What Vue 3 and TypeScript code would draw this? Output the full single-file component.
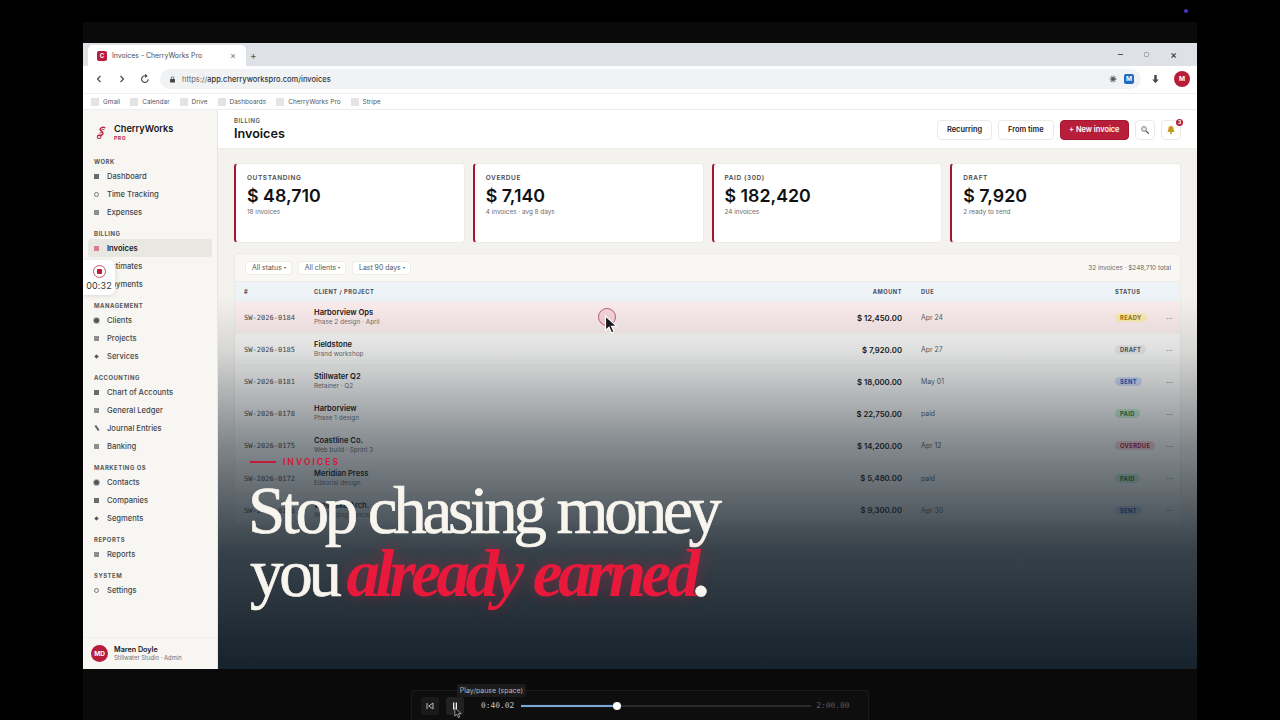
<script setup lang="ts">
interface NavItem { label: string; ico: string; active?: boolean }
interface NavSection { title: string; items: NavItem[] }
const sections: NavSection[] = [
  { title: 'WORK', items: [
    { label: 'Dashboard', ico: 'sq' }, { label: 'Time Tracking', ico: 'ring' }, { label: 'Expenses', ico: 'lt' } ] },
  { title: 'BILLING', items: [
    { label: 'Invoices', ico: 'pink', active: true }, { label: 'Estimates', ico: 'lt' }, { label: 'Payments', ico: 'lt' } ] },
  { title: 'MANAGEMENT', items: [
    { label: 'Clients', ico: 'dot' }, { label: 'Projects', ico: 'lt' }, { label: 'Services', ico: 'dia' } ] },
  { title: 'ACCOUNTING', items: [
    { label: 'Chart of Accounts', ico: 'sq' }, { label: 'General Ledger', ico: 'lt' }, { label: 'Journal Entries', ico: 'pen' }, { label: 'Banking', ico: 'lt' } ] },
  { title: 'MARKETING OS', items: [
    { label: 'Contacts', ico: 'dot' }, { label: 'Companies', ico: 'sq' }, { label: 'Segments', ico: 'dia' } ] },
  { title: 'REPORTS', items: [ { label: 'Reports', ico: 'lt' } ] },
  { title: 'SYSTEM', items: [ { label: 'Settings', ico: 'ring' } ] },
]
const bookmarks = ['Gmail', 'Calendar', 'Drive', 'Dashboards', 'CherryWorks Pro', 'Stripe']
const cards = [
  { label: 'OUTSTANDING', value: '$ 48,710', sub: '18 invoices' },
  { label: 'OVERDUE', value: '$ 7,140', sub: '4 invoices · avg 8 days' },
  { label: 'PAID (30D)', value: '$ 182,420', sub: '24 invoices' },
  { label: 'DRAFT', value: '$ 7,920', sub: '2 ready to send' },
]
const filters = ['All status', 'All clients', 'Last 90 days']
const rows = [
  { id: 'SW-2026-0184', name: 'Harborview Ops', sub: 'Phase 2 design · April', amount: '$ 12,450.00', due: 'Apr 24', status: 'READY' },
  { id: 'SW-2026-0185', name: 'Fieldstone', sub: 'Brand workshop', amount: '$ 7,920.00', due: 'Apr 27', status: 'DRAFT' },
  { id: 'SW-2026-0181', name: 'Stillwater Q2', sub: 'Retainer · Q2', amount: '$ 18,000.00', due: 'May 01', status: 'SENT' },
  { id: 'SW-2026-0178', name: 'Harborview', sub: 'Phase 1 design', amount: '$ 22,750.00', due: 'paid', status: 'PAID' },
  { id: 'SW-2026-0175', name: 'Coastline Co.', sub: 'Web build · Sprint 3', amount: '$ 14,200.00', due: 'Apr 12', status: 'OVERDUE' },
  { id: 'SW-2026-0172', name: 'Meridian Press', sub: 'Editorial design', amount: '$ 5,480.00', due: 'paid', status: 'PAID' },
  { id: 'SW-2026-0168', name: 'Westlake Arch.', sub: 'Wayfinding concept', amount: '$ 9,300.00', due: 'Apr 30', status: 'SENT' },
]
</script>

<template>
  <div class="root">
    <span class="spark"></span>
    <div class="stage">
      <div class="browser">
        <div class="tabstrip">
          <div class="tab">
            <span class="favicon">C</span>
            <span class="tab-title">Invoices - CherryWorks Pro</span>
            <span class="tab-x">×</span>
          </div>
          <span class="tab-plus">+</span>
          <div class="winctl">
            <span class="min"></span>
            <span class="max"></span>
            <span class="cls">×</span>
          </div>
        </div>
        <div class="addr-row">
          <svg class="nav-ic" viewBox="0 0 10 10"><path d="M6.5 2 3.5 5l3 3" /></svg>
          <svg class="nav-ic" viewBox="0 0 10 10"><path d="M3.5 2 6.5 5l-3 3" /></svg>
          <svg class="nav-ic" viewBox="0 0 10 10"><path d="M8.2 5.2A3.3 3.3 0 1 1 5.6 1.9M5.2.4l1.7 1.5-1.7 1.3" /></svg>
          <div class="omni">
            <svg class="lock" viewBox="0 0 8 8"><rect x="1.2" y="3.4" width="5.6" height="4" rx=".6" /><path d="M2.5 3.4V2.3a1.5 1.5 0 0 1 3 0v1.1" fill="none" stroke="#444" stroke-width=".8" /></svg>
            <span class="url"><span class="url-dim">https://</span>app.cherryworkspro.com/invoices</span>
            <span class="spacer"></span>
            <svg class="ext-gear" viewBox="0 0 10 10"><circle cx="5" cy="5" r="2.6" fill="#555" /><circle cx="5" cy="5" r="3.6" fill="none" stroke="#555" stroke-width="1.3" stroke-dasharray="1.2 1.1" /></svg>
            <span class="ext-m">M</span>
          </div>
          <svg class="dl" viewBox="0 0 10 12"><path d="M3.6 1h2.8v5h2.2L5 10.2 1.4 6h2.2z" fill="#4a4a4a" /></svg>
          <span class="acct">M</span>
        </div>
        <div class="bookmarks">
          <div v-for="b in bookmarks" :key="b" class="bm"><span class="bm-sq"></span><span>{{ b }}</span></div>
        </div>

        <div class="app">
          <aside class="side">
            <div class="brand">
              <svg class="logo" viewBox="0 0 12 15">
                <path d="M10 1.6C7.4.8 4.6 1.6 4.4 3.6c-.2 1.8 3.6 2 3.2 4.2-.3 1.8-3 3-5 2.4" fill="none" stroke="#b81d3a" stroke-width="1.5" />
                <circle cx="3.4" cy="11.6" r="2" fill="none" stroke="#b81d3a" stroke-width="1.1" />
                <path d="M5.6 4.2 9.4 3.4M3.6 7.6l3-.6" stroke="#7c1a2d" stroke-width=".8" fill="none" />
              </svg>
              <div class="brand-text">
                <div class="brand-name">CherryWorks</div>
                <div class="brand-pro">PRO</div>
              </div>
            </div>
            <nav class="nav">
              <section v-for="s in sections" :key="s.title" class="sec">
                <div class="sec-title">{{ s.title }}</div>
                <div v-for="i in s.items" :key="i.label" class="item" :class="{ active: i.active }">
                  <span class="ico" :class="i.ico"></span>
                  <span>{{ i.label }}</span>
                </div>
              </section>
            </nav>
            <div class="user">
              <span class="user-av">MD</span>
              <div class="user-text">
                <div class="user-name">Maren Doyle</div>
                <div class="user-sub">Stillwater Studio · Admin</div>
              </div>
            </div>
          </aside>

          <main class="main">
            <header class="top">
              <div>
                <div class="crumb">BILLING</div>
                <h1 class="title">Invoices</h1>
              </div>
              <div class="actions">
                <button class="btn">Recurring</button>
                <button class="btn">From time</button>
                <button class="btn primary">+ New invoice</button>
                <button class="btn sq-btn">
                  <svg viewBox="0 0 10 10" class="a-ic"><circle cx="4" cy="4" r="2.4" fill="#dfe8ee" stroke="#777" stroke-width=".9" /><path d="M5.9 5.9 8.8 8.8" stroke="#555" stroke-width="1.3" /></svg>
                </button>
                <button class="btn sq-btn">
                  <svg viewBox="0 0 10 10" class="a-ic"><path d="M5 1c-1.8 0-2.6 1.3-2.6 3 0 1.500-.6 2.300-1.200 3h7.600c-.6-.7-1.200-1.500-1.200-3 0-1.700-.8-3-2.600-3z" fill="#c9981f" /><circle cx="5" cy="8.200" r=".9" fill="#9a7415" /></svg>
                  <span class="badge">3</span>
                </button>
              </div>
            </header>

            <div class="content">
              <div class="cards">
                <div v-for="c in cards" :key="c.label" class="card">
                  <div class="card-label">{{ c.label }}</div>
                  <div class="card-value">{{ c.value }}</div>
                  <div class="card-sub">{{ c.sub }}</div>
                </div>
              </div>

              <div class="panel">
                <div class="toolbar">
                  <span v-for="f in filters" :key="f" class="pill">{{ f }} <i>▾</i></span>
                  <span class="spacer"></span>
                  <span class="count">32 invoices · $248,710 total</span>
                </div>
                <div class="grid thead">
                  <span>#</span>
                  <span>CLIENT / PROJECT</span>
                  <span class="right">AMOUNT</span>
                  <span>DUE</span>
                  <span>STATUS</span>
                  <span></span>
                </div>
                <div v-for="(r, idx) in rows" :key="r.id" class="grid row" :class="{ hot: idx === 0 }">
                  <span class="rid">{{ r.id }}</span>
                  <div>
                    <div class="rname">{{ r.name }}</div>
                    <div class="rsub">{{ r.sub }}</div>
                  </div>
                  <span class="right ramt">{{ r.amount }}</span>
                  <span class="rdue">{{ r.due }}</span>
                  <span class="st-cell"><span class="st" :class="r.status.toLowerCase()">{{ r.status }}</span></span>
                  <span class="more">···</span>
                </div>
              </div>
            </div>

            <div class="fade"></div>
            <div class="hero">
              <div class="eyebrow"><span class="eb-line"></span><span>INVOICES</span></div>
              <div class="headline">
                <div class="line1">Stop chasing money</div>
                <div>you <em>already earned</em><span class="period">.</span></div>
              </div>
            </div>
            <span class="ring-cursor"></span>
            <svg class="cursor" viewBox="0 0 14 20"><path d="M1.500 1v14.500l3.500-3.300 2.500 5.800 2.600-1.100-2.500-5.600 4.900-.2z" fill="#1b1b1f" stroke="#fff" stroke-width="1.200" /></svg>
          </main>
        </div>

        <div class="rec">
          <span class="rec-btn"><span class="rec-sq"></span></span>
          <span class="rec-time">00:32</span>
        </div>
      </div>

      <div class="player-wrap">
        <div class="player">
          <span class="p-btn">
            <svg viewBox="0 0 10 10" class="p-ic"><path d="M2 2v6M8 2 3.700 5 8 8z" fill="none" stroke="#bbb" stroke-width="1" /></svg>
          </span>
          <span class="p-btn on">
            <svg viewBox="0 0 10 10" class="p-ic"><path d="M3 1.500h1.300v7H3zM5.700 1.500H7v7H5.700z" fill="#eee" /></svg>
          </span>
          <span class="p-time">0:40.02</span>
          <div class="track"><div class="fill"></div><span class="knob"></span></div>
          <span class="p-end">2:00.00</span>
          <span class="tip">Play/pause (space)</span>
          <svg class="p-cursor" viewBox="0 0 14 20"><path d="M1.500 1v14.500l3.500-3.300 2.500 5.800 2.600-1.100-2.500-5.600 4.900-.2z" fill="#111" stroke="#ddd" stroke-width="1.100" /></svg>
        </div>
      </div>
    </div>
  </div>
</template>

<style>
html, body { margin: 0; background: #000; overflow: hidden; }
</style>

<style scoped>
* { box-sizing: border-box; }
.root { position: relative; width: 1280px; height: 720px; background: #000; display: flex; justify-content: center; font-family: Inter, "Liberation Sans", sans-serif; overflow: hidden; }
.spark { position: absolute; left: 1184px; top: 9px; width: 4px; height: 4px; border-radius: 50%; background: #4a35c8; }
.stage { width: 1114px; height: 698px; margin-top: 22px; padding-top: 21px; background: #0a0a0a; display: flex; flex-direction: column; }
.browser { position: relative; height: 626px; background: #fff; display: flex; flex-direction: column; }

.tabstrip { height: 23px; background: #dee1e6; display: flex; align-items: flex-end; position: relative; padding-left: 5px; flex: none; }
.tab { width: 158px; height: 21px; background: #fff; border-radius: 5px 5px 0 0; display: flex; align-items: center; padding-left: 9px; }
.favicon { width: 10px; height: 10px; border-radius: 2px; background: #b81d3a; color: #fff; font-size: 6px; font-weight: 700; display: flex; align-items: center; justify-content: center; margin-right: 5px; }
.tab-title { font-size: 6.900px; color: #4a4d52; flex: 1; white-space: nowrap; }
.tab-x { font-size: 9px; color: #777; margin-right: 10px; line-height: 1; }
.tab-plus { font-size: 10px; color: #555; margin: 0 0 6px 4px; line-height: 1; }
.winctl { position: absolute; right: 20px; top: 6px; display: flex; align-items: center; gap: 21px; height: 10px; }
.min { width: 5px; height: 1px; background: #555; }
.max { width: 5px; height: 5px; border: 1px solid #aaa; border-radius: 1px; }
.cls { font-size: 10px; color: #444; line-height: 10px; font-weight: 600; }

.addr-row { height: 28px; flex: none; display: flex; align-items: center; padding: 0 7px 1px 11px; border-bottom: 1px solid #eceef0; }
.nav-ic { width: 10px; height: 10px; fill: none; stroke: #444; stroke-width: 1.100; margin-right: 13px; flex: none; }
.omni { width: 981px; height: 20px; margin-left: -3px; border-radius: 10px; background: #f0f2f4; display: flex; align-items: center; padding: 0 7px 0 9px; flex: none; }
.lock { width: 7px; height: 7px; fill: #444; margin-right: 6px; }
.url { font-size: 7.500px; font-weight: 500; color: #33363a; white-space: nowrap; }
.url-dim { color: #666; font-weight: 400; }
.spacer { flex: 1; }
.ext-gear { width: 8px; height: 8px; margin-right: 7px; }
.ext-m { width: 10px; height: 10px; background: #2268c4; color: #fff; font-size: 6.500px; font-weight: 700; border-radius: 2px; display: flex; align-items: center; justify-content: center; }
.dl { width: 9px; height: 11px; margin-left: 10px; flex: none; }
.acct { width: 16px; height: 16px; margin-left: 14px; border-radius: 50%; background: #b81d3a; color: #fff; font-size: 6.500px; font-weight: 700; display: flex; align-items: center; justify-content: center; flex: none; }

.bookmarks { height: 16px; flex: none; display: flex; align-items: center; padding: 1px 0 0 8px; gap: 10px; border-bottom: 1px solid #ececec; font-size: 6.450px; color: #55585c; }
.bm { display: flex; align-items: center; gap: 4px; }
.bm-sq { width: 8px; height: 8px; background: #e4e4e4; }

.app { flex: 1; display: flex; min-height: 0; }
.side { width: 135px; flex: none; background: #f7f6f3; display: flex; flex-direction: column; border-right: 1px solid #e8e6e1; }
.brand { height: 39px; display: flex; align-items: center; padding: 6px 0 0 13px; gap: 7px; flex: none; }
.logo { width: 11px; height: 14px; }
.brand-name { font-size: 9.200px; font-weight: 600; color: #17171a; line-height: 10px; }
.brand-pro { font-size: 5px; font-weight: 700; letter-spacing: .12em; color: #b81d3a; line-height: 7px; margin-top: 1px; }
.nav { padding-top: 8px; flex: 1; }
.sec { margin-bottom: 8px; }
.sec-title { font-size: 5.900px; line-height: 10px; padding-left: 11px; font-weight: 700; letter-spacing: .09em; color: #55565a; }
.item { height: 18px; margin: 0 5px; padding-left: 5px; display: flex; align-items: center; font-size: 7.600px; font-weight: 500; color: #44464a; border-radius: 3px; }
.item.active { background: #e9e7e2; color: #17171a; font-weight: 600; }
.ico { width: 5px; height: 5px; margin-right: 8px; margin-left: 1px; flex: none; display: block; position: relative; }
.ico.sq { background: #6b6b6b; }
.ico.lt { background: #8e8e8e; }
.ico.pink { background: #d97d92; }
.ico.ring { border: 1.500px solid #777; border-radius: 50%; }
.ico.dot { background: #555; border-radius: 50%; box-shadow: 0 0 0 1px #bbb; }
.ico.dia { background: #555; transform: rotate(45deg) scale(.6); box-shadow: 0 0 1px #888; }
.ico.pen { background: #666; width: 2px; height: 6px; margin-left: 3px; margin-right: 9px; transform: rotate(-35deg); }
.user { height: 32px; flex: none; display: flex; align-items: center; padding-left: 8px; gap: 6px; border-top: 1px solid #efeeea; }
.user-av { width: 17px; height: 17px; border-radius: 50%; background: #b81d3a; color: #fff; font-size: 6.500px; font-weight: 700; display: flex; align-items: center; justify-content: center; }
.user-text { margin-top: 1px; }
.user-name { font-size: 7.200px; font-weight: 600; color: #17171a; line-height: 8px; }
.user-sub { font-size: 5.900px; color: #6f7074; line-height: 8px; }

.main { flex: 1; position: relative; background: #f4f2ee; display: flex; flex-direction: column; min-width: 0; overflow: hidden; }
.top { height: 39px; flex: none; background: #fff; display: flex; align-items: center; justify-content: space-between; padding: 1px 16px 0; border-bottom: 1px solid #eeece8; }
.crumb { font-size: 5.900px; line-height: 7px; margin-bottom: 2px; font-weight: 600; letter-spacing: .09em; color: #55565a; }
.title { margin: 0; font-size: 12.600px; line-height: 16px; font-weight: 600; color: #131316; }
.actions { display: flex; align-items: center; gap: 6px; }
.btn { height: 20px; padding: 0 9px; border: 1px solid #eceae5; background: #fff; border-radius: 4px; font: 600 7.400px Inter, "Liberation Sans", sans-serif; color: #1b1b1f; display: flex; align-items: center; position: relative; white-space: nowrap; }
.btn.primary { background: #b81d3a; color: #fff; border-color: #a41832; padding: 0 8.500px; }
.sq-btn { width: 20px; padding: 0; justify-content: center; }
.a-ic { width: 10px; height: 10px; }
.badge { position: absolute; right: -3px; top: -2px; width: 7px; height: 7px; border-radius: 50%; background: #b81d3a; color: #fff; font-size: 5px; font-weight: 700; line-height: 7px; text-align: center; }

.content { padding: 14px 16px 0 16px; flex: 1; }
.cards { display: grid; grid-template-columns: repeat(4, 1fr); gap: 8px; }
.card { height: 80px; background: #fff; border: 1px solid #ecebe6; border-left: 2px solid #a4182f; border-radius: 4px; padding: 10px 11px; }
.card-label { font-size: 6.500px; font-weight: 600; letter-spacing: .09em; color: #4a4b4f; line-height: 9px; }
.card-value { font-size: 17.800px; font-weight: 600; color: #111114; line-height: 24px; margin-top: 1px; }
.card-sub { font-size: 6.400px; color: #6a6b70; line-height: 9px; }

.panel { margin-top: 10px; background: #f8f7f3; border: 1px solid #ecebe6; border-radius: 4px; overflow: hidden; }
.toolbar { height: 27px; display: flex; align-items: center; padding: 0 9px 0 10px; gap: 6px; }
.pill { height: 14px; padding: 0 5px 0 6px; background: #fff; border: 1px solid #efede9; border-radius: 3px; font-size: 6.900px; color: #55565a; display: flex; align-items: center; gap: 2px; white-space: nowrap; }
.pill i { font-style: normal; font-size: 4px; }
.count { font-size: 6.400px; color: #66676b; white-space: nowrap; }
.grid { display: grid; grid-template-columns: 70px 500px 88px 213px 45px 1fr; column-gap: 0; align-items: center; padding-left: 9px; }
.grid > :nth-child(4) { margin-left: 19px; }
.thead { height: 20px; padding-bottom: 1px; background: #eef3f8; font-size: 5.700px; font-weight: 700; letter-spacing: .09em; color: #4c4e54; border-top: 1px solid #ecebe6; }
.row { height: 32.100px; background: #fcfbf9; border-top: 1px solid #f5f4f2; }
.row.hot { background: #fdeeee; }
.right { text-align: right; }
.rid { font-family: "DejaVu Sans Mono", monospace; font-size: 7.050px; color: #44464a; }
.rname { font-size: 7.550px; font-weight: 600; color: #16161a; line-height: 10px; }
.rsub { font-size: 6.400px; color: #6d6e72; line-height: 9px; }
.ramt { font-size: 7.750px; font-weight: 600; color: #16161a; }
.rdue { font-size: 6.900px; color: #5a5b60; }
.st-cell { display: flex; }
.st { display: block; height: 9px; line-height: 9px; padding: 0 5px; border-radius: 5px; font-size: 5.800px; font-weight: 700; letter-spacing: .06em; }
.ready { background: #fdeeb5; color: #94700f; }
.draft { background: #ebecef; color: #55575c; }
.sent { background: #d0e0fb; color: #1d4fb5; }
.paid { background: #c9f0d5; color: #17793c; }
.overdue { background: #f9d0d6; color: #a51836; }
.more { font-size: 8px; color: #777; line-height: 1; padding-left: 6px; }

.fade { position: absolute; inset: 0; pointer-events: none; background: linear-gradient(180deg, rgba(22,34,44,0) 33%, rgba(22,34,44,.13) 43%, rgba(22,34,44,.52) 60%, rgba(22,34,44,.85) 79%, rgba(22,34,44,.98) 97%, rgba(22,34,44,1) 100%); }
.hero { position: absolute; left: 32px; top: 347px; }
.eyebrow { display: flex; align-items: center; gap: 7px; font-size: 8.300px; font-weight: 700; letter-spacing: .26em; color: #d8193b; line-height: 10px; }
.eb-line { width: 26px; height: 1.500px; background: #c41a38; }
.headline { margin-top: 12px; font-family: "Liberation Serif", serif; font-size: 67px; line-height: 63px; letter-spacing: -4.200px; word-spacing: 1px; color: #f8f5ee; white-space: nowrap; -webkit-text-stroke: .7px #f8f5ee; }
.line1 { margin-left: -2px; }
.headline em { margin-left: -5px; font-weight: 700; font-style: italic; letter-spacing: -4.500px; color: #e9193c; -webkit-text-stroke: 0; text-shadow: 0 0 14px rgba(233,25,60,.35); }
.period { font-weight: 700; font-size: 66px; margin-left: -3px; line-height: 0; }
.ring-cursor { position: absolute; left: 380px; top: 198px; width: 18px; height: 18px; border-radius: 50%; border: 1px solid #c05a72; background: rgba(192,60,90,.12); }
.cursor { position: absolute; left: 386px; top: 205px; width: 14px; height: 20px; }

.rec { position: absolute; left: 0; top: 217px; width: 32px; height: 35px; background: #fff; border-radius: 0 6px 6px 0; display: flex; flex-direction: column; align-items: center; box-shadow: 0 1px 5px rgba(0,0,0,.12); padding-top: 5px; }
.rec-btn { width: 13px; height: 13px; border-radius: 50%; border: 1px solid #c8546c; display: flex; align-items: center; justify-content: center; }
.rec-sq { width: 5px; height: 5px; background: #b81d3a; border-radius: 1px; }
.rec-time { font-size: 9px; color: #333; margin-top: 2px; line-height: 11px; letter-spacing: .1px; white-space: nowrap; }

.player-wrap { flex: 1; display: flex; justify-content: center; padding-top: 21px; }
.player { position: relative; width: 458px; height: 30px; background: #0e0e0e; border: 1px solid #1a1a1a; border-bottom: 0; border-radius: 4px 4px 0 0; display: flex; align-items: center; padding: 0 19px 0 9px; }
.p-btn { width: 18px; height: 18px; border-radius: 3px; background: #1a1a1a; display: flex; align-items: center; justify-content: center; margin-right: 7px; flex: none; }
.p-btn.on { background: #222; margin-right: 0; }
.p-ic { width: 10px; height: 10px; }
.p-time, .p-end { font-family: "DejaVu Sans Mono", monospace; font-size: 7.900px; color: #c8c8c8; white-space: nowrap; }
.p-time { margin-left: 17px; }
.p-end { color: #5f5f5f; margin-left: -3px; }
.track { position: relative; width: 290px; height: 2px; margin: 0 8px 0 7px; background: #2a2a2a; flex: none; }
.fill { width: 96px; height: 100%; background: #7aa6d4; box-shadow: 0 0 1px #4f7fb5; }
.knob { position: absolute; left: 92px; top: -3px; width: 8px; height: 8px; border-radius: 50%; background: #fff; }
.tip { position: absolute; left: 45px; top: -7px; width: 69px; height: 13px; background: #1b1b1b; border-radius: 2px; font-size: 7px; line-height: 13px; text-align: center; color: #b8b8b8; white-space: nowrap; }
.p-cursor { position: absolute; left: 42px; top: 16px; width: 8px; height: 12px; }
</style>
